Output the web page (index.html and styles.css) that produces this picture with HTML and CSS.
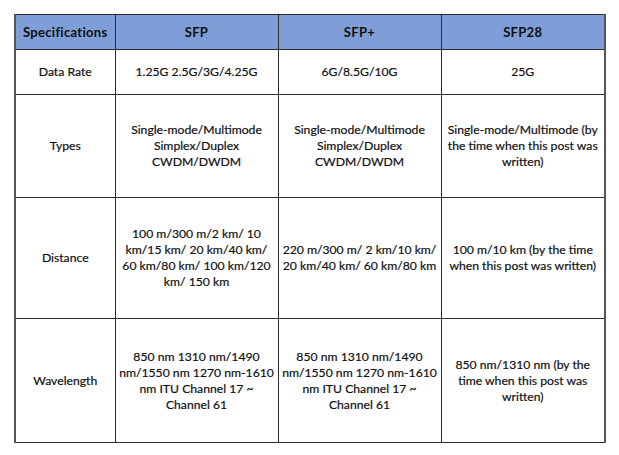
FILE: index.html
```html
<!DOCTYPE html>
<html>
<head>
<meta charset="utf-8">
<link rel="stylesheet" href="styles.css">
</head>
<body>
<table class="spec">
  <colgroup>
    <col class="c1"><col class="c2"><col class="c3"><col class="c4">
  </colgroup>
  <thead>
    <tr class="head">
      <th>Specifications</th>
      <th>SFP</th>
      <th>SFP+</th>
      <th>SFP28</th>
    </tr>
  </thead>
  <tbody>
    <tr class="r-rate">
      <td>Data Rate</td>
      <td>1.25G 2.5G/3G/4.25G</td>
      <td>6G/8.5G/10G</td>
      <td>25G</td>
    </tr>
    <tr class="r-types">
      <td>Types</td>
      <td>Single-mode/Multimode<br>Simplex/Duplex<br>CWDM/DWDM</td>
      <td>Single-mode/Multimode<br>Simplex/Duplex<br>CWDM/DWDM</td>
      <td>Single-mode/Multimode (by<br>the time when this post was<br>written)</td>
    </tr>
    <tr class="r-dist">
      <td>Distance</td>
      <td>100 m/300 m/2 km/ 10<br>km/15 km/ 20 km/40 km/<br>60 km/80 km/ 100 km/120<br>km/ 150 km</td>
      <td>220 m/300 m/ 2 km/10 km/<br>20 km/40 km/ 60 km/80 km</td>
      <td>100 m/10 km (by the time<br>when this post was written)</td>
    </tr>
    <tr class="r-wave">
      <td>Wavelength</td>
      <td>850 nm 1310 nm/1490<br>nm/1550 nm 1270 nm-1610<br>nm ITU Channel 17 ~<br>Channel 61</td>
      <td>850 nm 1310 nm/1490<br>nm/1550 nm 1270 nm-1610<br>nm ITU Channel 17 ~<br>Channel 61</td>
      <td>850 nm/1310 nm (by the<br>time when this post was<br>written)</td>
    </tr>
  </tbody>
</table>
</body>
</html>
```
FILE: styles.css
```css
html, body {
  margin: 0;
  background: #ffffff;
}
body {
  padding: 14px 0 0 14px;
  font-family: Lato, "Open Sans", sans-serif;
  font-size: 12.2px;
  color: #111111;
}
.spec {
  border-collapse: collapse;
  table-layout: fixed;
  width: 590px;
}
.c1 { width: 100px; }
.c2 { width: 163px; }
.c3 { width: 163px; }
.c4 { width: 164px; }
.spec th, .spec td {
  border: 1px solid #2a2a2a;
  text-align: center;
  vertical-align: middle;
  padding: 0 2px;
  line-height: 16px;
  white-space: nowrap;
}
.spec td {
  -webkit-text-stroke: 0.2px #111111;
}
.spec th {
  background: #7f9dd6;
  font-weight: 700;
  font-size: 13px;
  letter-spacing: 0.3px;
}
.spec tr > :first-child {
  border-left: 2px solid #555555;
}
.spec tr > :last-child {
  border-right: 2px solid #555555;
}
.head { height: 35px; }
.r-rate { height: 45px; }
.r-types { height: 103px; }
.r-dist { height: 121px; }
.r-wave { height: 124px; }
```
